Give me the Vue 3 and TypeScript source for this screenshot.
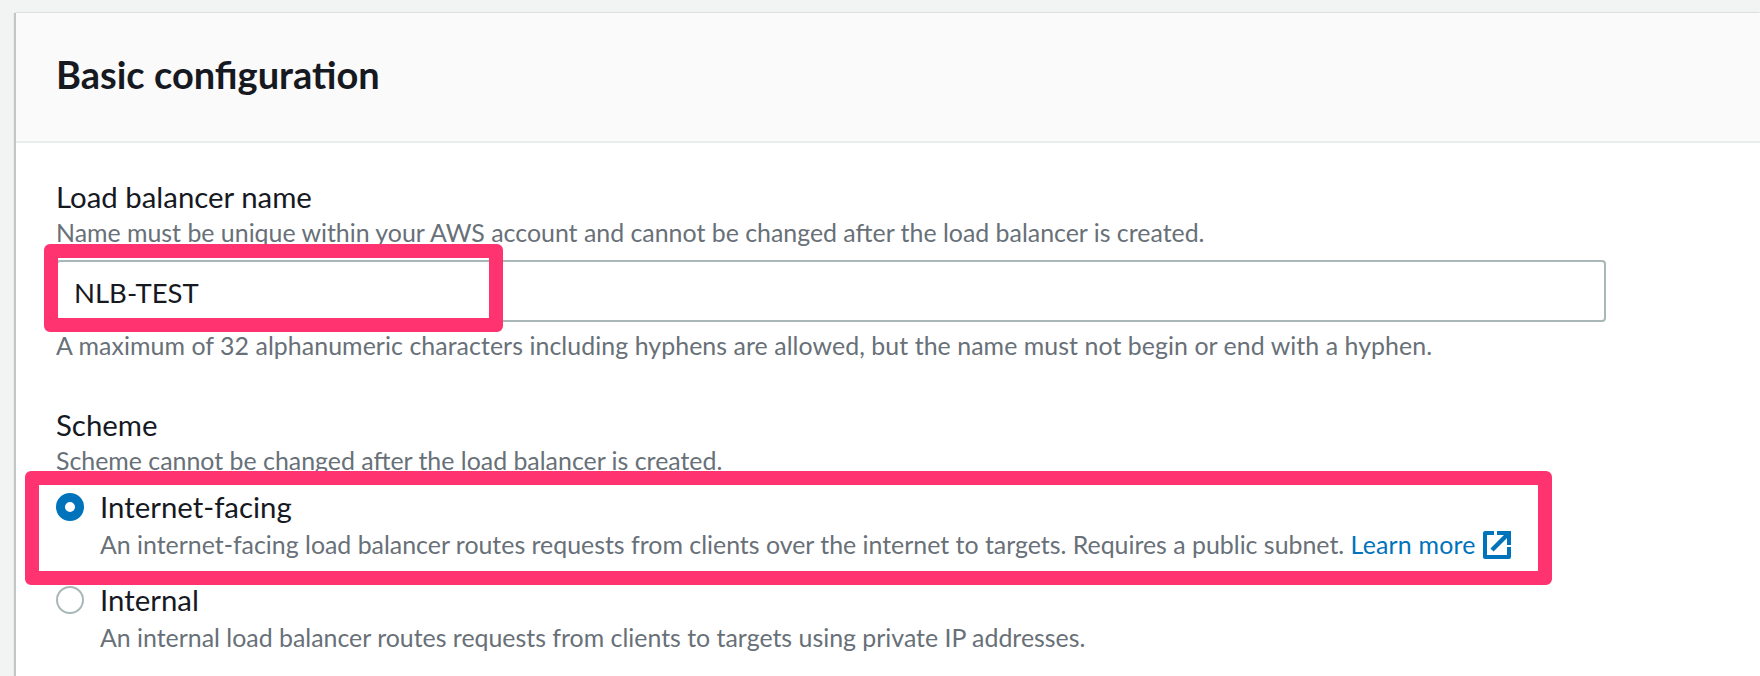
<script setup lang="ts">
const name = 'NLB-TEST'
</script>

<template>
  <div class="page">
    <section class="card">
      <header class="card-head"><h2>Basic configuration</h2></header>
      <div class="card-body">
        <div class="field">
          <div class="label">Load balancer name</div>
          <div class="desc">Name must be unique within your AWS account and cannot be changed after the load balancer is created.</div>
          <div class="input"><span>{{ name }}</span></div>
          <div class="desc hint">A maximum of 32 alphanumeric characters including hyphens are allowed, but the name must not begin or end with a hyphen.</div>
          <div class="mark mark-name"></div>
        </div>
        <div class="field scheme">
          <div class="label">Scheme</div>
          <div class="desc">Scheme cannot be changed after the load balancer is created.</div>
          <div class="radios">
            <div class="radio-row">
              <span class="radio on"></span>
              <div>
                <div class="opt-label">Internet-facing</div>
                <div class="desc opt">An internet-facing load balancer routes requests from clients over the internet to targets. Requires a public subnet. <span class="link">Learn more</span><svg class="ext" viewBox="0 0 28 28" width="28" height="28" aria-hidden="true"><path d="M11 2H2v24h24V16" fill="none" stroke="#0073bb" stroke-width="4" stroke-linejoin="round"/><path d="M9 19 24 4" fill="none" stroke="#0073bb" stroke-width="4.4"/><path d="M14 2h12v12" fill="none" stroke="#0073bb" stroke-width="4"/></svg></div>
              </div>
            </div>
            <div class="radio-row">
              <span class="radio"></span>
              <div>
                <div class="opt-label">Internal</div>
                <div class="desc opt">An internal load balancer routes requests from clients to targets using private IP addresses.</div>
              </div>
            </div>
            <div class="mark mark-scheme"></div>
          </div>
        </div>
      </div>
    </section>
  </div>
</template>

<style>
html, body { margin: 0; background: #f2f3f3; }
</style>

<style scoped>
.page {
  width: 1760px;
  height: 676px;
  overflow: hidden;
  background: #f2f3f3;
  padding: 13px 0 0 16px;
  box-sizing: border-box;
  font-family: Lato, "Noto Sans", sans-serif;
  color: #16191f;
}
.card {
  background: #fff;
  height: 700px;
  box-shadow: -2px 0 1px rgba(0, 28, 36, 0.2), 0 -1px 1px rgba(0, 28, 36, 0.05);
}
.card-head {
  height: 130px;
  box-sizing: border-box;
  background: #fafafa;
  border-bottom: 2px solid #eaeded;
  display: flex;
  align-items: center;
  padding: 0 0 6px 40px;
}
h2 {
  margin: 0;
  font-size: 38px;
  font-weight: 700;
}
.card-body {
  padding: 36px 0 0 40px;
}
.field { position: relative; }
.label {
  font-size: 29.4px;
  line-height: 35px;
}
.opt-label {
  font-size: 29.4px;
  line-height: 36px;
}
.desc {
  font-size: 24.9px;
  line-height: 36px;
  color: #687078;
  white-space: nowrap;
}
.opt { margin-top: 1px; }
.input {
  width: 1550px;
  height: 62px;
  margin-top: 10px;
  box-sizing: border-box;
  border: 2px solid #aab7b8;
  border-radius: 4px;
  display: flex;
  align-items: center;
  padding: 2px 0 0 16px;
  font-size: 27.5px;
  color: #16191f;
  background: #fff;
}
.hint {
  margin-top: 5px;
  letter-spacing: 0.06px;
}
.scheme { margin-top: 44px; }
.radios {
  position: relative;
  display: flex;
  flex-direction: column;
  gap: 20px;
  margin-top: 11px;
}
.radio-row {
  display: flex;
  gap: 16px;
}
.radio {
  flex: none;
  width: 28px;
  height: 28px;
  box-sizing: border-box;
  margin-top: 4px;
  border-radius: 50%;
  border: 2px solid #aab7b8;
  background: #fff;
}
.radio.on {
  border: 9px solid #0073bb;
}
.link {
  color: #0073bb;
  letter-spacing: 0.2px;
}
.ext {
  vertical-align: -5px;
  margin-left: 7px;
}
.mark {
  position: absolute;
  border: 14px solid #ff3370;
  border-radius: 6px;
  box-sizing: border-box;
  pointer-events: none;
}
.mark-name {
  left: -12px;
  top: 65px;
  width: 459px;
  height: 88px;
}
.mark-scheme {
  left: -31px;
  top: -18px;
  width: 1527px;
  height: 114px;
}
</style>
